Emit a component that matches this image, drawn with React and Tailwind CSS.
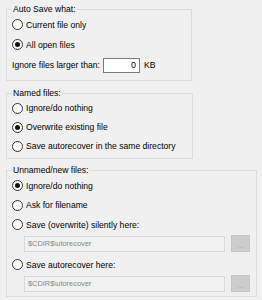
import React from "react";

const Radio = ({ checked, label }) => (
  <div className="flex items-center gap-[3px]">
    <span className="flex h-[11px] w-[11px] items-center justify-center rounded-full border border-[#333] bg-white">
      {checked && <span className="h-[5px] w-[5px] rounded-full bg-[#111]" />}
    </span>
    <span>{label}</span>
  </div>
);

const PathField = ({ value }) => (
  <div className="ml-[12px] flex h-[17px] items-center gap-[6px]">
    <div className="flex h-[16px] w-[201px] items-center border border-[#dadada] bg-[#f2f2f2] pl-[3px] text-[7.4px] text-[#858585]">
      {value}
    </div>
    <div className="flex h-[17px] w-[19px] items-end justify-center border border-[#c4c4c4] bg-[#cdcdcd] pb-[2px] text-[7px] leading-none text-[#a8a8a8]">
      ...
    </div>
  </div>
);

const Group = ({ title, className, children }) => (
  <fieldset className={"ml-[6px] border border-[#dcdcdc] pl-[5px] " + className}>
    <legend className="h-[11px] px-[1px] leading-[11px]">{title}</legend>
    {children}
  </fieldset>
);

export default function App() {
  return (
    <div
      className="h-[300px] w-[262px] overflow-hidden bg-[#f0f0f0] pt-[4px] text-[8.6px] text-black"
      style={{ fontFamily: '"Liberation Sans", Arial, sans-serif' }}
    >
      <Group title="Auto Save what:" className="w-[186px] pb-[7px]">
        <div className="flex h-[20px] items-center">
          <Radio label="Current file only" />
        </div>
        <div className="flex h-[20px] items-center">
          <Radio checked label="All open files" />
        </div>
        <div className="mt-[3px] flex h-[15px] items-center">
          <span className="w-[91px]">Ignore files larger than:</span>
          <div className="flex h-[15px] w-[37px] items-center justify-end border border-[#7a7a7a] bg-white pr-[3px] text-[9px]">
            0
          </div>
          <span className="ml-[4px]">KB</span>
        </div>
      </Group>

      <Group title="Named files:" className="mt-[7px] w-[187px] pb-[2px]">
        <div className="flex h-[19px] items-center">
          <Radio label="Ignore/do nothing" />
        </div>
        <div className="flex h-[19px] items-center">
          <Radio checked label="Overwrite existing file" />
        </div>
        <div className="flex h-[19px] items-center">
          <Radio label="Save autorecover in the same directory" />
        </div>
      </Group>

      <Group title="Unnamed/new files:" className="mt-[6px] w-[251px] pb-[4px]">
        <div className="flex h-[20px] items-center">
          <Radio checked label="Ignore/do nothing" />
        </div>
        <div className="flex h-[19px] items-center">
          <Radio label="Ask for filename" />
        </div>
        <div className="flex h-[20px] items-center">
          <Radio label="Save (overwrite) silently here:" />
        </div>
        <PathField value="$CDIR$\utorecover" />
        <div className="mt-[3px] flex h-[20px] items-center">
          <Radio label="Save autorecover here:" />
        </div>
        <PathField value="$CDIR$\utorecover" />
      </Group>
    </div>
  );
}
